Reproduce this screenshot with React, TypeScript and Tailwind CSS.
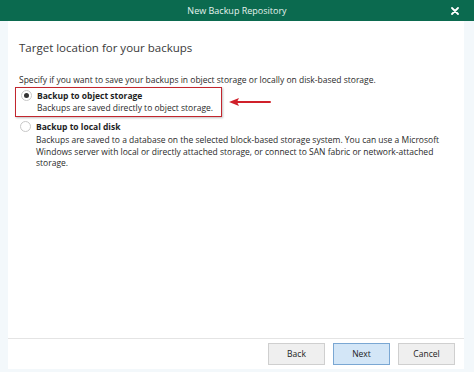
export default function App() {
  return (
    <div
      className="w-[474px] h-[372px] flex flex-col bg-[#f3f8fb] overflow-hidden"
      style={{ fontFamily: '"Open Sans", "Noto Sans", sans-serif' }}
    >
      {/* title bar */}
      <div className="h-[21px] bg-[#0b6a4f] flex items-center relative shrink-0">
        <div className="flex-1 text-center text-[9px] text-[#e6f2ee]">New Backup Repository</div>
        <svg className="absolute right-[15px] top-[7px]" width="8" height="8" viewBox="0 0 8 8">
          <path d="M1 1 L7 7 M7 1 L1 7" stroke="#ffffff" strokeWidth="1.8" strokeLinecap="round" />
        </svg>
      </div>

      <div className="flex-1 flex flex-col ml-[8px] mr-[10px] mb-[3px] bg-white">
        <div className="flex-1 flex flex-col pl-[11px] pr-[14px]">
          <div className="mt-[18px] text-[11.5px] text-[#3a3a3a]">Target location for your backups</div>
          <div className="mt-[18px] text-[8.5px] text-[#2b2b2b] leading-[11px]">
            Specify if you want to save your backups in object storage or locally on disk-based storage.
          </div>

          {/* object storage option */}
          <div className="flex items-center mt-[2px] -ml-[4px]">
            <div className="w-[207px] h-[30px] border-[1.5px] border-[#c2262e] flex flex-col justify-center pl-[5px] shadow-[1px_1px_2px_rgba(0,0,0,0.25)]">
              <div className="flex items-center gap-[5px]">
                <div className="w-[11px] h-[11px] rounded-full border border-[#c8c8c8] bg-white flex items-center justify-center">
                  <div className="w-[5px] h-[5px] rounded-full bg-[#333]" />
                </div>
                <span className="text-[8.5px] font-bold text-[#1e1e1e] leading-[11px]">Backup to object storage</span>
              </div>
              <div className="pl-[16px] text-[8.5px] text-[#2b2b2b] leading-[12px] mt-[1px]">
                Backups are saved directly to object storage.
              </div>
            </div>
            <svg className="ml-[7px]" width="42" height="10" viewBox="0 0 42 10">
              <path d="M8 5 L41 5" stroke="#d0202a" strokeWidth="2" strokeLinecap="round" />
              <path d="M0 5 L10 1 L8 5 L10 9 Z" fill="#d0202a" />
            </svg>
          </div>

          {/* local disk option */}
          <div className="mt-[4px] flex items-center gap-[5px] ml-[1px]">
            <div className="w-[11px] h-[11px] rounded-full border border-[#c8c8c8] bg-white" />
            <span className="text-[8.5px] font-bold text-[#1e1e1e] leading-[11px]">Backup to local disk</span>
          </div>
          <div className="pl-[17px] mt-[2px] text-[8.5px] text-[#2b2b2b] leading-[11.5px]">
            Backups are saved to a database on the selected block-based storage system. You can use a Microsoft Windows
            server with local or directly attached storage, or connect to SAN fabric or network-attached storage.
          </div>
        </div>

        {/* footer */}
        <div className="h-[31px] border-t border-[#e4e4e4] flex items-center justify-end gap-[8px] pr-[9px] shrink-0">
          <button className="w-[57px] h-[22px] border border-[#cfcfcf] bg-[#efefef] text-[8.5px] text-[#222]">
            Back
          </button>
          <button className="w-[57px] h-[22px] border border-[#7aa7d3] bg-[#d3e6f7] text-[8.5px] text-[#222]">
            Next
          </button>
          <button className="w-[57px] h-[22px] border border-[#cfcfcf] bg-[#efefef] text-[8.5px] text-[#222]">
            Cancel
          </button>
        </div>
      </div>
    </div>
  );
}
